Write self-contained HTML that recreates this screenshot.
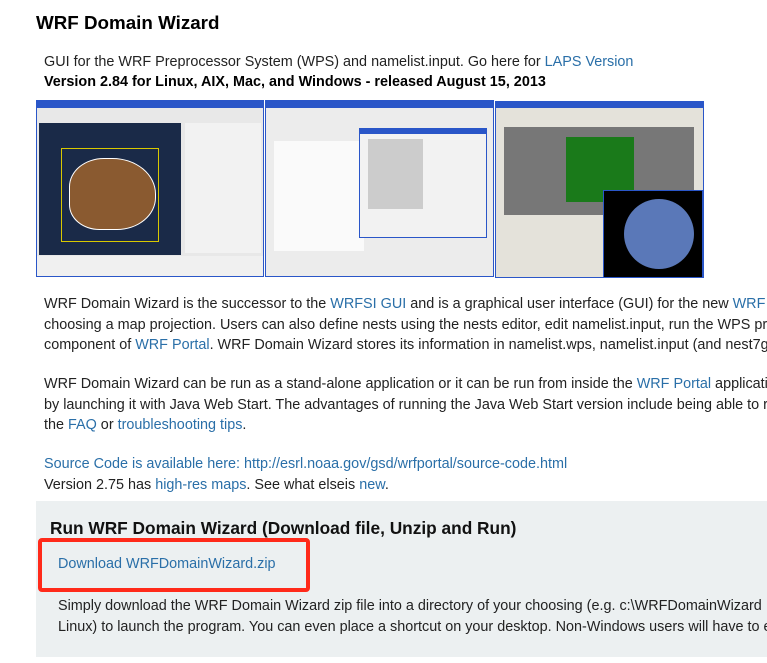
<!DOCTYPE html>
<html><head><meta charset="utf-8"><style>
body{margin:0;width:767px;height:663px;overflow:hidden;background:#fff;font-family:"Liberation Sans",Arial,sans-serif;color:#222;position:relative}
.a{position:absolute;white-space:nowrap;font-size:14.4px}
a{color:#2a6fa8;text-decoration:none}
.shot{position:absolute;border:1px solid #2a56c8;overflow:hidden}
</style></head><body>
<div class="a" style="left:36px;top:12px;font-size:18.8px;font-weight:bold;color:#000">WRF Domain Wizard</div>
<div class="a" style="left:44px;top:54px">GUI for the WRF Preprocessor System (WPS) and namelist.input. Go here for <a>LAPS Version</a></div>
<div class="a" style="left:44px;top:74px;font-weight:bold;color:#000">Version 2.84 for Linux, AIX, Mac, and Windows - released August 15, 2013</div>

<div class="shot" style="left:36px;top:100px;width:226px;height:175px;background:#e8e8e8">
 <div style="height:7px;background:#2a56c8"></div>
 <div style="position:absolute;left:2px;top:22px;width:142px;height:132px;background:#1a2a48">
  <div style="position:absolute;left:30px;top:35px;width:85px;height:70px;background:#8a5a30;border-radius:40% 50% 45% 35%;border:1px solid #fff"></div>
  <div style="position:absolute;left:22px;top:25px;width:96px;height:92px;border:1px solid #d8c800"></div>
 </div>
 <div style="position:absolute;left:148px;top:22px;width:76px;height:130px;background:#f2f2f2"></div>
 <div style="position:absolute;left:0;top:155px;width:226px;height:20px;background:#f0f0f0"></div>
</div>
<div class="shot" style="left:265px;top:100px;width:227px;height:175px;background:#ececec">
 <div style="height:7px;background:#2a56c8"></div>
 <div style="position:absolute;left:8px;top:40px;width:90px;height:110px;background:#fafafa"></div>
 <div style="position:absolute;left:93px;top:27px;width:126px;height:108px;background:#f2f2f2;border:1px solid #2a56c8">
  <div style="height:5px;background:#2a56c8"></div>
  <div style="position:absolute;left:8px;top:10px;width:55px;height:70px;background:#ccc"></div>
 </div>
</div>
<div class="shot" style="left:495px;top:101px;width:207px;height:175px;background:#e4e2da">
 <div style="height:6px;background:#2a56c8"></div>
 <div style="position:absolute;left:8px;top:25px;width:190px;height:88px;background:#777">
  <div style="position:absolute;left:62px;top:10px;width:68px;height:65px;background:#1a7a1a"></div>
 </div>
 <div style="position:absolute;left:107px;top:88px;width:98px;height:86px;background:#000;border:1px solid #2a56c8">
  <div style="position:absolute;left:20px;top:8px;width:70px;height:70px;border-radius:50%;background:#5a78b8"></div>
 </div>
</div>

<div class="a" style="left:44px;top:294px;line-height:20.5px">WRF Domain Wizard is the successor to the <a>WRFSI GUI</a> and is a graphical user interface (GUI) for the new <a>WRF</a><br>choosing a map projection. Users can also define nests using the nests editor, edit namelist.input, run the WPS pr<br>component of <a>WRF Portal</a>. WRF Domain Wizard stores its information in namelist.wps, namelist.input (and nest7g</div>
<div class="a" style="left:44px;top:374px;line-height:20.5px">WRF Domain Wizard can be run as a stand-alone application or it can be run from inside the <a>WRF Portal</a> applicati<br>by launching it with Java Web Start. The advantages of running the Java Web Start version include being able to r<br>the <a>FAQ</a> or <a>troubleshooting tips</a>.</div>
<div class="a" style="left:44px;top:454px;line-height:20.5px"><a>Source Code is available here: http://esrl.noaa.gov/gsd/wrfportal/source-code.html</a><br>Version 2.75 has <a>high-res maps</a>. See what elseis <a>new</a>.</div>

<div style="position:absolute;left:36px;top:501px;width:731px;height:156px;background:#ecf0f1"></div>
<div class="a" style="left:50px;top:518px;font-size:17.3px;font-weight:bold;color:#111">Run WRF Domain Wizard (Download file, Unzip and Run)</div>
<div style="position:absolute;left:38px;top:538px;width:264px;height:46px;border:4px solid #ff2a1a;border-radius:4px"></div>
<div class="a" style="left:58px;top:556px"><a>Download WRFDomainWizard.zip</a></div>
<div class="a" style="left:58px;top:596px;line-height:21px">Simply download the WRF Domain Wizard zip file into a directory of your choosing (e.g. c:\WRFDomainWizard<br>Linux) to launch the program. You can even place a shortcut on your desktop. Non-Windows users will have to e</div>
</body></html>
